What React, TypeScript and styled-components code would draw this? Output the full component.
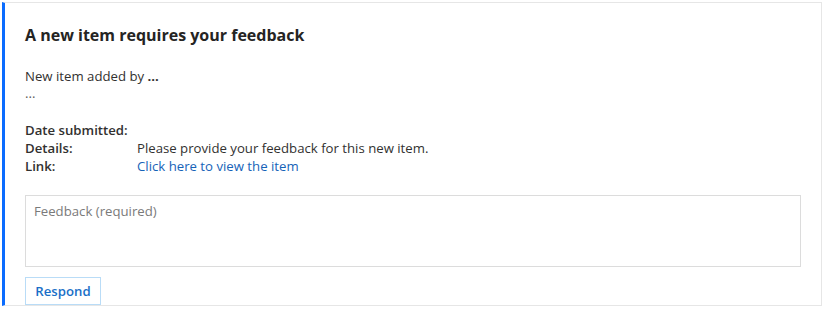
import React from "react";
import styled, { createGlobalStyle } from "styled-components";

const Global = createGlobalStyle`
  html, body { margin: 0; padding: 0; background: #fff; }
  body { font-family: "Open Sans", "Noto Sans", sans-serif; color: #323130; }
`;

const Card = styled.div`
  box-sizing: border-box;
  margin: 2px 0 0 2px;
  width: 820px;
  height: 304px;
  border: 1px solid #e6e6e6;
  border-left: 3px solid #0a6cff;
  padding: 15px 20px 0 20px;
  display: flex;
  flex-direction: column;
`;

const Title = styled.h1`
  margin: 0;
  font-size: 16px;
  font-weight: 700;
  line-height: 34px;
  color: #252423;
`;

const Text = styled.div`
  font-size: 13.2px;
  line-height: 18px;
  color: #323130;
`;

const Intro = styled(Text)`
  margin-top: 15px;
`;

const Dots = styled(Text)`
  color: #605e5c;
  line-height: 16px;
`;

const Facts = styled.div`
  margin-top: 20px;
  display: grid;
  grid-template-columns: 112px 1fr;
  font-size: 13.2px;
  line-height: 18px;
`;

const Label = styled.div`
  font-weight: 600;
  color: #323130;
`;

const Value = styled.div`
  color: #323130;
`;

const Link = styled.a`
  color: #1663b8;
  text-decoration: none;
`;

const Feedback = styled.textarea`
  box-sizing: border-box;
  margin-top: 20px;
  width: 776px;
  height: 72px;
  border: 1px solid #dcdcdc;
  padding: 6px 8px;
  font-family: "Open Sans", "Noto Sans", sans-serif;
  font-size: 13.2px;
  resize: none;
  outline: none;
  &::placeholder { color: #7a7a7a; }
`;

const Button = styled.button`
  box-sizing: border-box;
  margin-top: 10px;
  width: 76px;
  height: 28px;
  background: #fff;
  border: 1px solid #b9dcf7;
  color: #1a6fc7;
  font-family: "Open Sans", "Noto Sans", sans-serif;
  font-size: 13.2px;
  font-weight: 600;
  padding: 0;
`;

export default function App() {
  return (
    <>
      <Global />
      <Card>
        <Title>A new item requires your feedback</Title>
        <Intro>
          New item added by <b>...</b>
        </Intro>
        <Dots>...</Dots>
        <Facts>
          <Label>Date submitted:</Label>
          <Value></Value>
          <Label>Details:</Label>
          <Value>Please provide your feedback for this new item.</Value>
          <Label>Link:</Label>
          <Value>
            <Link href="#">Click here to view the item</Link>
          </Value>
        </Facts>
        <Feedback placeholder="Feedback (required)" />
        <Button>Respond</Button>
      </Card>
    </>
  );
}
